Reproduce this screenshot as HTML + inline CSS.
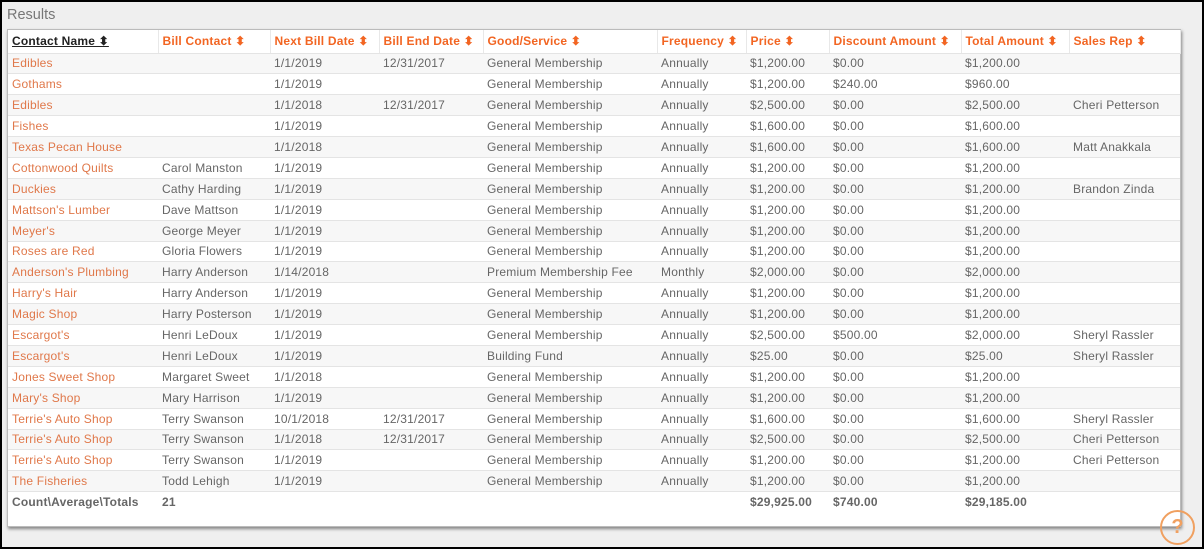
<!DOCTYPE html><html><head><style>
*{margin:0;padding:0;box-sizing:border-box}
body{width:1204px;height:549px;background:#000;font-family:"Liberation Sans",sans-serif;overflow:hidden}
.frame{position:absolute;left:2px;top:2px;width:1200px;height:545px;background:#efefef}
.title{position:absolute;left:5px;top:5px;font-size:14.5px;color:#777}
.panel{position:absolute;left:5px;top:27px;width:1174px;height:498px;background:#fff;border:1px solid #bbb;box-shadow:1px 2px 3px rgba(0,0,0,.45)}
table{border-collapse:collapse;table-layout:fixed;width:1172px;font-size:12px;letter-spacing:.2px}
td,th{height:20.9px;padding:0 4px;white-space:nowrap;overflow:hidden;text-align:left;color:#666;border-bottom:1px solid #e4e4e4}
th{color:#f26522;font-weight:bold;border-right:1px solid #e8e8e8;height:23px;padding-bottom:1px}
th.s{color:#222;text-decoration:underline}
tbody tr:nth-child(odd){background:#f7f7f7}
td.l{color:#e0784a}
tr.t td{font-weight:bold;border:none;background:#fff}
.help{position:absolute;left:1158px;top:508px;width:35px;height:35px;border:2px solid #f0a060;border-radius:50%;color:#f0a060;font-size:20px;text-align:center;line-height:31px;font-weight:bold}
</style></head><body><div class="frame">
<div class="title">Results</div>
<div class="panel"><table>
<colgroup><col style="width:150px"><col style="width:112px"><col style="width:109px"><col style="width:104px"><col style="width:174px"><col style="width:89px"><col style="width:83px"><col style="width:132px"><col style="width:108px"><col style="width:111px"></colgroup>
<thead><tr><th class="s">Contact Name ⬍</th><th>Bill Contact ⬍</th><th>Next Bill Date ⬍</th><th>Bill End Date ⬍</th><th>Good/Service ⬍</th><th>Frequency ⬍</th><th>Price ⬍</th><th>Discount Amount ⬍</th><th>Total Amount ⬍</th><th>Sales Rep ⬍</th></tr></thead>
<tbody>
<tr><td class="l">Edibles</td><td></td><td>1/1/2019</td><td>12/31/2017</td><td>General Membership</td><td>Annually</td><td>$1,200.00</td><td>$0.00</td><td>$1,200.00</td><td></td></tr>
<tr><td class="l">Gothams</td><td></td><td>1/1/2019</td><td></td><td>General Membership</td><td>Annually</td><td>$1,200.00</td><td>$240.00</td><td>$960.00</td><td></td></tr>
<tr><td class="l">Edibles</td><td></td><td>1/1/2018</td><td>12/31/2017</td><td>General Membership</td><td>Annually</td><td>$2,500.00</td><td>$0.00</td><td>$2,500.00</td><td>Cheri Petterson</td></tr>
<tr><td class="l">Fishes</td><td></td><td>1/1/2019</td><td></td><td>General Membership</td><td>Annually</td><td>$1,600.00</td><td>$0.00</td><td>$1,600.00</td><td></td></tr>
<tr><td class="l">Texas Pecan House</td><td></td><td>1/1/2018</td><td></td><td>General Membership</td><td>Annually</td><td>$1,600.00</td><td>$0.00</td><td>$1,600.00</td><td>Matt Anakkala</td></tr>
<tr><td class="l">Cottonwood Quilts</td><td>Carol Manston</td><td>1/1/2019</td><td></td><td>General Membership</td><td>Annually</td><td>$1,200.00</td><td>$0.00</td><td>$1,200.00</td><td></td></tr>
<tr><td class="l">Duckies</td><td>Cathy Harding</td><td>1/1/2019</td><td></td><td>General Membership</td><td>Annually</td><td>$1,200.00</td><td>$0.00</td><td>$1,200.00</td><td>Brandon Zinda</td></tr>
<tr><td class="l">Mattson's Lumber</td><td>Dave Mattson</td><td>1/1/2019</td><td></td><td>General Membership</td><td>Annually</td><td>$1,200.00</td><td>$0.00</td><td>$1,200.00</td><td></td></tr>
<tr><td class="l">Meyer's</td><td>George Meyer</td><td>1/1/2019</td><td></td><td>General Membership</td><td>Annually</td><td>$1,200.00</td><td>$0.00</td><td>$1,200.00</td><td></td></tr>
<tr><td class="l">Roses are Red</td><td>Gloria Flowers</td><td>1/1/2019</td><td></td><td>General Membership</td><td>Annually</td><td>$1,200.00</td><td>$0.00</td><td>$1,200.00</td><td></td></tr>
<tr><td class="l">Anderson's Plumbing</td><td>Harry Anderson</td><td>1/14/2018</td><td></td><td>Premium Membership Fee</td><td>Monthly</td><td>$2,000.00</td><td>$0.00</td><td>$2,000.00</td><td></td></tr>
<tr><td class="l">Harry's Hair</td><td>Harry Anderson</td><td>1/1/2019</td><td></td><td>General Membership</td><td>Annually</td><td>$1,200.00</td><td>$0.00</td><td>$1,200.00</td><td></td></tr>
<tr><td class="l">Magic Shop</td><td>Harry Posterson</td><td>1/1/2019</td><td></td><td>General Membership</td><td>Annually</td><td>$1,200.00</td><td>$0.00</td><td>$1,200.00</td><td></td></tr>
<tr><td class="l">Escargot's</td><td>Henri LeDoux</td><td>1/1/2019</td><td></td><td>General Membership</td><td>Annually</td><td>$2,500.00</td><td>$500.00</td><td>$2,000.00</td><td>Sheryl Rassler</td></tr>
<tr><td class="l">Escargot's</td><td>Henri LeDoux</td><td>1/1/2019</td><td></td><td>Building Fund</td><td>Annually</td><td>$25.00</td><td>$0.00</td><td>$25.00</td><td>Sheryl Rassler</td></tr>
<tr><td class="l">Jones Sweet Shop</td><td>Margaret Sweet</td><td>1/1/2018</td><td></td><td>General Membership</td><td>Annually</td><td>$1,200.00</td><td>$0.00</td><td>$1,200.00</td><td></td></tr>
<tr><td class="l">Mary's Shop</td><td>Mary Harrison</td><td>1/1/2019</td><td></td><td>General Membership</td><td>Annually</td><td>$1,200.00</td><td>$0.00</td><td>$1,200.00</td><td></td></tr>
<tr><td class="l">Terrie's Auto Shop</td><td>Terry Swanson</td><td>10/1/2018</td><td>12/31/2017</td><td>General Membership</td><td>Annually</td><td>$1,600.00</td><td>$0.00</td><td>$1,600.00</td><td>Sheryl Rassler</td></tr>
<tr><td class="l">Terrie's Auto Shop</td><td>Terry Swanson</td><td>1/1/2018</td><td>12/31/2017</td><td>General Membership</td><td>Annually</td><td>$2,500.00</td><td>$0.00</td><td>$2,500.00</td><td>Cheri Petterson</td></tr>
<tr><td class="l">Terrie's Auto Shop</td><td>Terry Swanson</td><td>1/1/2019</td><td></td><td>General Membership</td><td>Annually</td><td>$1,200.00</td><td>$0.00</td><td>$1,200.00</td><td>Cheri Petterson</td></tr>
<tr><td class="l">The Fisheries</td><td>Todd Lehigh</td><td>1/1/2019</td><td></td><td>General Membership</td><td>Annually</td><td>$1,200.00</td><td>$0.00</td><td>$1,200.00</td><td></td></tr>
<tr class="t"><td>Count\Average\Totals</td><td>21</td><td></td><td></td><td></td><td></td><td>$29,925.00</td><td>$740.00</td><td>$29,185.00</td><td></td></tr>
</tbody></table></div>
<div class="help">?</div>
</div></body></html>
